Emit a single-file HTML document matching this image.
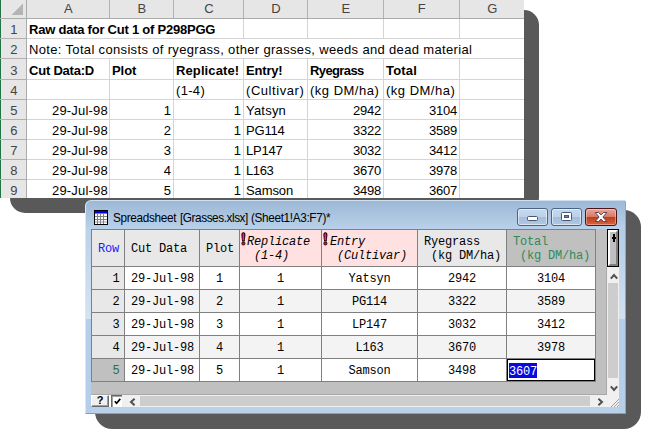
<!DOCTYPE html>
<html><head><meta charset="utf-8"><title>Spreadsheet</title>
<style>
html,body{margin:0;padding:0;background:#fff;}
body{width:646px;height:434px;position:relative;overflow:hidden;font-family:"Liberation Sans",sans-serif;}
.abs,.abs *{position:absolute;}
.xl{left:0;top:0;width:524px;height:198px;background:#fff;overflow:hidden;}
.sh{background:#595959;border-radius:15px;}
.hl{left:0;height:1px;background:#d4d4d4;width:524px;}
.vl{top:0;width:1px;background:#d4d4d4;height:198px;}
.xt{font-size:13px;line-height:14px;height:14px;white-space:nowrap;color:#000;letter-spacing:0.32px;}
.xb{font-weight:bold;letter-spacing:-0.25px;}
.xh{color:#444;text-align:center;}
.r{text-align:right;}
.gs{font-family:"Liberation Mono",monospace;font-size:12px;letter-spacing:-0.2px;line-height:14px;white-space:pre;color:#000;}
.c{text-align:center;}
</style></head><body>

<div class="abs sh" style="left:10px;top:10px;width:529px;height:203px"></div>
<div class="abs sh" style="left:95px;top:210px;width:546px;height:219px;border-radius:17px"></div>
<div class="abs xl">
<div style="left:0;top:0;width:524px;height:18px;background:#e6e6e6"></div>
<div style="left:0;top:0;width:26px;height:198px;background:#e6e6e6"></div>
<div style="left:0;top:0;width:1px;height:198px;background:#217346"></div>
<svg style="left:11px;top:3px" width="13" height="13" viewBox="0 0 13 13"><path d="M12 0.5V12H0.5Z" fill="#b4b4b4"/></svg>
<div class="hl" style="top:38px;left:26px"></div>
<div class="hl" style="top:58px;left:26px"></div>
<div class="hl" style="top:79px;left:26px"></div>
<div class="hl" style="top:99px;left:26px"></div>
<div class="hl" style="top:119px;left:26px"></div>
<div class="hl" style="top:139px;left:26px"></div>
<div class="hl" style="top:159px;left:26px"></div>
<div class="hl" style="top:179px;left:26px"></div>
<div class="vl" style="left:109px;top:18px"></div>
<div class="vl" style="left:173px;top:18px"></div>
<div class="vl" style="left:243px;top:18px"></div>
<div class="vl" style="left:307px;top:18px"></div>
<div class="vl" style="left:383px;top:18px"></div>
<div class="vl" style="left:459px;top:18px"></div>
<div class="hl" style="top:38px;width:26px;background:#b1b1b1"></div>
<div class="hl" style="top:58px;width:26px;background:#b1b1b1"></div>
<div class="hl" style="top:79px;width:26px;background:#b1b1b1"></div>
<div class="hl" style="top:99px;width:26px;background:#b1b1b1"></div>
<div class="hl" style="top:119px;width:26px;background:#b1b1b1"></div>
<div class="hl" style="top:139px;width:26px;background:#b1b1b1"></div>
<div class="hl" style="top:159px;width:26px;background:#b1b1b1"></div>
<div class="hl" style="top:179px;width:26px;background:#b1b1b1"></div>
<div class="vl" style="left:109px;height:18px;background:#b1b1b1"></div>
<div class="vl" style="left:173px;height:18px;background:#b1b1b1"></div>
<div class="vl" style="left:243px;height:18px;background:#b1b1b1"></div>
<div class="vl" style="left:307px;height:18px;background:#b1b1b1"></div>
<div class="vl" style="left:383px;height:18px;background:#b1b1b1"></div>
<div class="vl" style="left:459px;height:18px;background:#b1b1b1"></div>
<div class="hl" style="top:18px;background:#ababab"></div>
<div class="vl" style="left:26px;background:#ababab"></div>
<div style="left:27px;top:19px;width:216px;height:19px;background:#fff"></div>
<div style="left:27px;top:39px;width:433px;height:19px;background:#fff"></div>
<div class="xt xh" style="left:27px;width:83px;top:2px">A</div>
<div class="xt xh" style="left:110px;width:64px;top:2px">B</div>
<div class="xt xh" style="left:174px;width:70px;top:2px">C</div>
<div class="xt xh" style="left:244px;width:64px;top:2px">D</div>
<div class="xt xh" style="left:308px;width:76px;top:2px">E</div>
<div class="xt xh" style="left:384px;width:76px;top:2px">F</div>
<div class="xt xh" style="left:460px;width:65px;top:2px">G</div>
<div class="xt xh" style="left:1px;width:26px;top:23px">1</div>
<div class="xt xh" style="left:1px;width:26px;top:43px">2</div>
<div class="xt xh" style="left:1px;width:26px;top:64px">3</div>
<div class="xt xh" style="left:1px;width:26px;top:84px">4</div>
<div class="xt xh" style="left:1px;width:26px;top:104px">5</div>
<div class="xt xh" style="left:1px;width:26px;top:124px">6</div>
<div class="xt xh" style="left:1px;width:26px;top:144px">7</div>
<div class="xt xh" style="left:1px;width:26px;top:164px">8</div>
<div class="xt xh" style="left:1px;width:26px;top:184px">9</div>
<div class="xt xb" style="letter-spacing:-0.231px;left:29px;top:23px">Raw data for Cut 1 of P298PGG</div>
<div class="xt" style="letter-spacing:0.338px;left:29px;top:43px">Note: Total consists of ryegrass, other grasses, weeds and dead material</div>
<div class="xt xb" style="letter-spacing:-0.22px;left:29px;top:64px">Cut Data:D</div>
<div class="xt xb" style="letter-spacing:-0.075px;left:112px;top:64px">Plot</div>
<div class="xt xb" style="letter-spacing:0.111px;left:176px;top:64px">Replicate!</div>
<div class="xt xb" style="letter-spacing:-0.186px;left:246px;top:64px">Entry!</div>
<div class="xt xb" style="letter-spacing:-0.615px;left:310px;top:64px">Ryegrass</div>
<div class="xt xb" style="letter-spacing:0.181px;left:386px;top:64px">Total</div>
<div class="xt" style="letter-spacing:0.32px;left:176px;top:84px">(1-4)</div>
<div class="xt" style="letter-spacing:0.556px;left:246px;top:84px">(Cultivar)</div>
<div class="xt" style="letter-spacing:0.493px;left:310px;top:84px">(kg DM/ha)</div>
<div class="xt" style="letter-spacing:0.493px;left:386px;top:84px">(kg DM/ha)</div>
<div class="xt r" style="letter-spacing:0.204px;right:416px;top:104px">29-Jul-98</div>
<div class="xt r" style="letter-spacing:0px;right:353px;top:104px">1</div>
<div class="xt r" style="letter-spacing:0px;right:283px;top:104px">1</div>
<div class="xt" style="letter-spacing:0.21px;left:246px;top:104px">Yatsyn</div>
<div class="xt r" style="letter-spacing:-0.23px;right:143px;top:104px">2942</div>
<div class="xt r" style="letter-spacing:-0.23px;right:67px;top:104px">3104</div>
<div class="xt r" style="letter-spacing:0.204px;right:416px;top:124px">29-Jul-98</div>
<div class="xt r" style="letter-spacing:0px;right:353px;top:124px">2</div>
<div class="xt r" style="letter-spacing:0px;right:283px;top:124px">1</div>
<div class="xt" style="letter-spacing:-0.169px;left:246px;top:124px">PG114</div>
<div class="xt r" style="letter-spacing:-0.23px;right:143px;top:124px">3322</div>
<div class="xt r" style="letter-spacing:-0.23px;right:67px;top:124px">3589</div>
<div class="xt r" style="letter-spacing:0.204px;right:416px;top:144px">29-Jul-98</div>
<div class="xt r" style="letter-spacing:0px;right:353px;top:144px">3</div>
<div class="xt r" style="letter-spacing:0px;right:283px;top:144px">1</div>
<div class="xt" style="letter-spacing:-0.24px;left:246px;top:144px">LP147</div>
<div class="xt r" style="letter-spacing:-0.23px;right:143px;top:144px">3032</div>
<div class="xt r" style="letter-spacing:-0.23px;right:67px;top:144px">3412</div>
<div class="xt r" style="letter-spacing:0.204px;right:416px;top:164px">29-Jul-98</div>
<div class="xt r" style="letter-spacing:0px;right:353px;top:164px">4</div>
<div class="xt r" style="letter-spacing:0px;right:283px;top:164px">1</div>
<div class="xt" style="letter-spacing:-0.397px;left:246px;top:164px">L163</div>
<div class="xt r" style="letter-spacing:-0.23px;right:143px;top:164px">3670</div>
<div class="xt r" style="letter-spacing:-0.23px;right:67px;top:164px">3978</div>
<div class="xt r" style="letter-spacing:0.204px;right:416px;top:184px">29-Jul-98</div>
<div class="xt r" style="letter-spacing:0px;right:353px;top:184px">5</div>
<div class="xt r" style="letter-spacing:0px;right:283px;top:184px">1</div>
<div class="xt" style="letter-spacing:-0.092px;left:246px;top:184px">Samson</div>
<div class="xt r" style="letter-spacing:-0.23px;right:143px;top:184px">3498</div>
<div class="xt r" style="letter-spacing:-0.23px;right:67px;top:184px">3607</div>
</div>
<div class="abs" style="left:85px;top:200px;width:541px;height:214px;border-radius:6px 3px 0 0;background:linear-gradient(#9db8d6 0px,#a6c0dc 10px,#b9d1ea 29px,#b9d1ea 100%);overflow:hidden;">
<div style="left:0;top:0;right:0;bottom:0;border-radius:6px 3px 0 0;box-sizing:border-box;border-left:1px solid #dbe7f3;border-top:1px solid #cfdeee;border-right:1px solid #3cc6ee;border-bottom:1px solid #35bfe3"></div>
<div style="left:1px;top:29px;width:5px;height:90px;background:linear-gradient(#bbd2ea,#d5e3f3)"></div>
<div style="left:534px;top:29px;width:6px;height:90px;background:linear-gradient(#b3cce8,#d2e1f2)"></div>
<div style="left:1px;top:119px;width:5px;height:94px;background:#b5cee9"></div>
<div style="left:534px;top:119px;width:6px;height:94px;background:#b5cee9"></div>
<svg style="left:9px;top:10px" width="14" height="15" viewBox="0 0 14 15"><rect x="0" y="0" width="14" height="15" fill="#000"/><rect x="1" y="1" width="12" height="13" fill="#808080"/><rect x="1" y="1" width="12" height="2" fill="#0000f0"/><g fill="#fff"><rect x="1" y="4" width="2" height="2"/><rect x="4" y="4" width="2" height="2"/><rect x="7" y="4" width="2" height="2"/><rect x="10" y="4" width="3" height="2"/><rect x="1" y="7" width="2" height="2"/><rect x="4" y="7" width="2" height="2"/><rect x="7" y="7" width="2" height="2"/><rect x="10" y="7" width="3" height="2"/><rect x="1" y="10" width="2" height="1.6"/><rect x="4" y="10" width="2" height="1.6"/><rect x="7" y="10" width="2" height="1.6"/><rect x="10" y="10" width="3" height="1.6"/><rect x="1" y="12.4" width="2" height="1.6"/><rect x="4" y="12.4" width="2" height="1.6"/><rect x="7" y="12.4" width="2" height="1.6"/><rect x="10" y="12.4" width="3" height="1.6"/></g></svg>
<div style="left:27.7px;top:10px;font-size:12.4px;letter-spacing:-0.335px;line-height:16px;white-space:nowrap;color:#000;transform:scaleX(0.95);transform-origin:0 0">Spreadsheet</div>
<div style="left:94.8px;top:10px;font-size:12.4px;letter-spacing:-0.452px;line-height:16px;white-space:nowrap;color:#000;transform:scaleX(0.95);transform-origin:0 0">[Grasses.xlsx]</div>
<div style="left:165.9px;top:10px;font-size:12.4px;letter-spacing:-0.366px;line-height:16px;white-space:nowrap;color:#000;transform:scaleX(0.95);transform-origin:0 0">(Sheet1!A3:F7)*</div>
<div style="left:432px;top:8px;width:31px;height:18px;border:1px solid #4c6484;border-radius:3px;box-sizing:border-box;box-shadow:inset 0 0 0 1px rgba(255,255,255,0.55);background:linear-gradient(#c4d8ee 0,#bdd2ea 47%,#a3bddb 50%,#afc8e3 100%)"><div style="left:9px;top:7px;width:11px;height:5px;background:#fff;border:1px solid #4a5670;border-radius:1.5px;box-sizing:border-box"></div></div>
<div style="left:466px;top:8px;width:31px;height:18px;border:1px solid #4c6484;border-radius:3px;box-sizing:border-box;box-shadow:inset 0 0 0 1px rgba(255,255,255,0.55);background:linear-gradient(#c4d8ee 0,#bdd2ea 47%,#a3bddb 50%,#afc8e3 100%)"><div style="left:9px;top:3px;width:11px;height:9px;background:#fff;border:1px solid #4a5670;border-radius:1.5px;box-sizing:border-box"><div style="left:2px;top:2px;width:5px;height:3px;background:#6a86b0;border:1px solid #4a5670;box-sizing:border-box"></div></div></div>
<div style="left:500px;top:8px;width:32px;height:18px;border:1px solid #4d1518;border-radius:3px;box-sizing:border-box;box-shadow:inset 0 0 0 1px rgba(255,220,210,0.45);background:linear-gradient(#e9a99b 0,#d9796a 47%,#bf3b1d 50%,#d4663f 100%)"><svg style="left:8px;top:2px" width="14" height="12" viewBox="0 0 14 12"><path d="M1.2 1.5h3.4l2.4 2.4 2.4-2.4h3.4L8.9 6l3.9 4.5H9.4L7 8.1 4.6 10.5H1.2L5.1 6Z" fill="#fff" stroke="#4a3a4a" stroke-width="0.9" stroke-linejoin="round"/></svg></div>
<div style="left:6px;top:29px;width:528px;height:178px;background:#c0c0c0;overflow:hidden">
<div style="left:0px;top:0;width:33px;height:37px;background:#e8e8e8"></div>
<div style="left:33px;top:0;width:75px;height:37px;background:#e8e8e8"></div>
<div style="left:108px;top:0;width:40px;height:37px;background:#e8e8e8"></div>
<div style="left:148px;top:0;width:82px;height:37px;background:#ffe1e1"></div>
<div style="left:230px;top:0;width:96px;height:37px;background:#ffe1e1"></div>
<div style="left:326px;top:0;width:89px;height:37px;background:#e8e8e8"></div>
<div style="left:415px;top:0;width:89px;height:37px;background:#c0c0c0"></div>
<div style="left:33px;top:37px;width:471px;height:23px;background:#fff"></div>
<div style="left:0;top:37px;width:33px;height:23px;background:#e8e8e8"></div>
<div style="left:33px;top:60px;width:471px;height:23px;background:#f3f3f3"></div>
<div style="left:0;top:60px;width:33px;height:23px;background:#e8e8e8"></div>
<div style="left:33px;top:83px;width:471px;height:23px;background:#fff"></div>
<div style="left:0;top:83px;width:33px;height:23px;background:#e8e8e8"></div>
<div style="left:33px;top:106px;width:471px;height:23px;background:#f3f3f3"></div>
<div style="left:0;top:106px;width:33px;height:23px;background:#e8e8e8"></div>
<div style="left:33px;top:129px;width:471px;height:23px;background:#fff"></div>
<div style="left:0;top:129px;width:33px;height:23px;background:#c0c0c0"></div>
<div style="left:0;top:0px;width:505px;height:1px;background:#808080"></div>
<div style="left:0;top:37px;width:505px;height:1px;background:#808080"></div>
<div style="left:0;top:60px;width:505px;height:1px;background:#808080"></div>
<div style="left:0;top:83px;width:505px;height:1px;background:#808080"></div>
<div style="left:0;top:106px;width:505px;height:1px;background:#808080"></div>
<div style="left:0;top:129px;width:505px;height:1px;background:#808080"></div>
<div style="left:0;top:152px;width:505px;height:1px;background:#808080"></div>
<div style="left:0px;top:0;width:1px;height:153px;background:#808080"></div>
<div style="left:33px;top:0;width:1px;height:153px;background:#808080"></div>
<div style="left:108px;top:0;width:1px;height:153px;background:#808080"></div>
<div style="left:148px;top:0;width:1px;height:153px;background:#808080"></div>
<div style="left:230px;top:0;width:1px;height:153px;background:#808080"></div>
<div style="left:326px;top:0;width:1px;height:153px;background:#808080"></div>
<div style="left:415px;top:0;width:1px;height:153px;background:#808080"></div>
<div style="left:504px;top:0;width:1px;height:153px;background:#808080"></div>
<div class="gs" style="left:7px;top:13px;color:#2020ff">Row</div>
<div class="gs" style="left:40px;top:13px;">Cut Data</div>
<div class="gs" style="left:115px;top:13px;">Plot</div>
<div class="gs" style="left:156px;top:6px;font-style:italic">Replicate
 (1-4)</div>
<div class="gs" style="left:239px;top:6px;font-style:italic">Entry
 (Cultivar)</div>
<div class="gs" style="left:333px;top:6px;">Ryegrass
 (kg DM/ha)</div>
<div class="gs" style="left:422px;top:6px;color:#2e8b57">Total
 (kg DM/ha)</div>
<svg style="left:149.6px;top:3px" width="5" height="14" viewBox="0 0 5 14"><path d="M2.4 0.2C3.8 0.2 4.5 1.3 4.4 3L3.7 9.4H1.1L0.4 3C0.3 1.3 1 0.2 2.4 0.2Z" fill="#000"/><rect x="1.5" y="1.3" width="1.8" height="7.2" rx="0.8" fill="#ff2080"/><ellipse cx="2.4" cy="11.6" rx="2" ry="2" fill="#2a1a1a"/><rect x="1.3" y="10.7" width="2.2" height="1.9" rx="0.4" fill="#ff1010"/></svg>
<svg style="left:231.6px;top:3px" width="5" height="14" viewBox="0 0 5 14"><path d="M2.4 0.2C3.8 0.2 4.5 1.3 4.4 3L3.7 9.4H1.1L0.4 3C0.3 1.3 1 0.2 2.4 0.2Z" fill="#000"/><rect x="1.5" y="1.3" width="1.8" height="7.2" rx="0.8" fill="#ff2080"/><ellipse cx="2.4" cy="11.6" rx="2" ry="2" fill="#2a1a1a"/><rect x="1.3" y="10.7" width="2.2" height="1.9" rx="0.4" fill="#ff1010"/></svg>
<div class="gs r" style="left:0;width:28.6px;top:43px;color:#000">1</div>
<div class="gs" style="left:40px;top:43px;">29-Jul-98</div>
<div class="gs c" style="left:108px;width:41px;top:43px">1</div>
<div class="gs c" style="left:148px;width:83px;top:43px">1</div>
<div class="gs c" style="left:230px;width:97px;top:43px">Yatsyn</div>
<div class="gs c" style="left:326px;width:90px;top:43px">2942</div>
<div class="gs c" style="left:415px;width:90px;top:43px">3104</div>
<div class="gs r" style="left:0;width:28.6px;top:66px;color:#000">2</div>
<div class="gs" style="left:40px;top:66px;">29-Jul-98</div>
<div class="gs c" style="left:108px;width:41px;top:66px">2</div>
<div class="gs c" style="left:148px;width:83px;top:66px">1</div>
<div class="gs c" style="left:230px;width:97px;top:66px">PG114</div>
<div class="gs c" style="left:326px;width:90px;top:66px">3322</div>
<div class="gs c" style="left:415px;width:90px;top:66px">3589</div>
<div class="gs r" style="left:0;width:28.6px;top:89px;color:#000">3</div>
<div class="gs" style="left:40px;top:89px;">29-Jul-98</div>
<div class="gs c" style="left:108px;width:41px;top:89px">3</div>
<div class="gs c" style="left:148px;width:83px;top:89px">1</div>
<div class="gs c" style="left:230px;width:97px;top:89px">LP147</div>
<div class="gs c" style="left:326px;width:90px;top:89px">3032</div>
<div class="gs c" style="left:415px;width:90px;top:89px">3412</div>
<div class="gs r" style="left:0;width:28.6px;top:112px;color:#000">4</div>
<div class="gs" style="left:40px;top:112px;">29-Jul-98</div>
<div class="gs c" style="left:108px;width:41px;top:112px">4</div>
<div class="gs c" style="left:148px;width:83px;top:112px">1</div>
<div class="gs c" style="left:230px;width:97px;top:112px">L163</div>
<div class="gs c" style="left:326px;width:90px;top:112px">3670</div>
<div class="gs c" style="left:415px;width:90px;top:112px">3978</div>
<div class="gs r" style="left:0;width:28.6px;top:135px;color:#2e6b4f">5</div>
<div class="gs" style="left:40px;top:135px;">29-Jul-98</div>
<div class="gs c" style="left:108px;width:41px;top:135px">5</div>
<div class="gs c" style="left:148px;width:83px;top:135px">1</div>
<div class="gs c" style="left:230px;width:97px;top:135px">Samson</div>
<div class="gs c" style="left:326px;width:90px;top:135px">3498</div>
<div style="left:416px;top:130px;width:88px;height:22px;border:1px solid #000;box-sizing:border-box;background:#fff"></div>
<div style="left:418px;top:134px;width:28px;height:15px;background:#0808e0"></div>
<div class="gs" style="left:418px;top:136px;color:#fff">3607</div>
<div style="left:516px;top:0;width:12px;height:38px;background:#000"></div>
<div style="left:517px;top:1px;width:10px;height:36px;background:#c0c0c0;box-sizing:border-box;border-left:2px solid #fff;border-top:2px solid #fff;border-right:2px solid #808080;border-bottom:2px solid #808080"></div>
<div style="left:521.5px;top:5px;width:2px;height:8px;background:#000"></div>
<div style="left:520.5px;top:7.5px;width:4px;height:2px;background:#000"></div>
<div style="left:515px;top:38px;width:1px;height:128px;background:#a8a8a8"></div>
<div style="left:0;top:165px;width:516px;height:1px;background:#a8a8a8"></div>
<div style="left:516px;top:38px;width:12px;height:128px;background:#f0f0f0"></div>
<div style="left:517px;top:54px;width:10px;height:94.5px;background:#cdcdcd"></div>
<svg style="left:519px;top:43.5px" width="8" height="7" viewBox="0 0 8 7"><path d="M0.8 5.6L4 2L7.2 5.6" fill="none" stroke="#505050" stroke-width="2"/></svg>
<svg style="left:519px;top:155.5px" width="8" height="7" viewBox="0 0 8 7"><path d="M0.8 1.4L4 5L7.2 1.4" fill="none" stroke="#505050" stroke-width="2"/></svg>
<div style="left:0;top:166px;width:528px;height:12px;background:#f0f0f0"></div>
<div style="left:49px;top:167px;width:449.5px;height:10px;background:#cdcdcd"></div>
<svg style="left:37.5px;top:168.5px" width="7" height="8" viewBox="0 0 7 8"><path d="M5.6 0.8L2 4L5.6 7.2" fill="none" stroke="#505050" stroke-width="2"/></svg>
<svg style="left:506px;top:168.5px" width="7" height="8" viewBox="0 0 7 8"><path d="M1.4 0.8L5 4L1.4 7.2" fill="none" stroke="#505050" stroke-width="2"/></svg>
<svg style="left:519px;top:169px" width="9" height="9" viewBox="0 0 9 9"><path d="M9 1L1 9M9 4L4 9M9 7L7 9" stroke="#a0a0a0" stroke-width="1"/></svg>
<div style="left:0;top:166px;width:18px;height:12px;background:#f0f0f0;border-left:1px solid #fff;border-top:1px solid #fff;border-right:1px solid #696969;border-bottom:1px solid #696969;box-shadow:inset -1px -1px 0 #a0a0a0;box-sizing:border-box"><div style="left:0;top:-2px;width:16px;text-align:center;font-size:11px;line-height:12px;font-weight:bold;color:#000">?</div></div>
<div style="left:18px;top:166px;width:2px;height:12px;background:#fff"></div>
<div style="left:20px;top:166px;width:11px;height:12px;background:#fff;border-left:1px solid #696969;border-top:1px solid #696969;box-shadow:inset 1px 1px 0 #a0a0a0;box-sizing:border-box"><svg style="left:2px;top:2px" width="7" height="7" viewBox="0 0 7 7"><path d="M0.8 3.2L2.6 5.2L6.3 0.9" fill="none" stroke="#000" stroke-width="1.7"/></svg></div>
</div>
</div>
</body></html>
